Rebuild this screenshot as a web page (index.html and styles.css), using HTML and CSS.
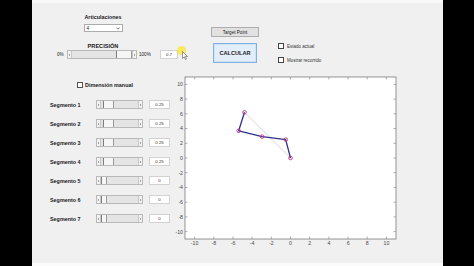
FILE: index.html
```html
<!DOCTYPE html>
<html>
<head>
  <link rel="stylesheet" href="styles.css">
</head>
<body>
  <div class="window">
    <div class="top">
      <div class="controls">
        <div class="group">
          <div class="caption">Articulaciones</div>
          <div class="select">
            <span>4</span>
            <svg class="caret" width="4" height="3" viewBox="0 0 4 3"><path d="M0.3 0.5L2 2.3L3.7 0.5" fill="none" stroke="#444" stroke-width="0.7"/></svg>
          </div>
          <div class="heading">PRECISIÓN</div>
        </div>
        <div class="precision">
          <span class="pct">0%</span>
          <div class="slider wide">
            <span class="arrow left"></span>
            <span class="track"><span class="thumb" style="margin-left:44px;width:16px"></span></span>
            <span class="arrow right"></span>
          </div>
          <span class="pct max">100%</span>
          <div class="edit small">0.7</div>
          <span class="pointer">
            <span class="halo"></span>
            <svg class="arrow-cursor" width="6" height="9" viewBox="0 0 6 9"><path d="M0.5 0.5L0.5 7.5L2.2 5.9L3.4 8.5L4.4 8L3.3 5.5L5.5 5.5Z" fill="#fff" stroke="#555" stroke-width="0.6"/></svg>
          </span>
        </div>
      </div>
      <div class="actions">
        <div class="btn">Target Point</div>
        <div class="btn primary">CALCULAR</div>
      </div>
      <div class="options">
        <div class="check"><span class="box"></span>Estado actual</div>
        <div class="check"><span class="box"></span>Mostrar recorrido</div>
      </div>
    </div>

    <div class="bottom">
      <div class="segments">
        <div class="check manual"><span class="box"></span>Dimensión manual</div>
        <div class="seg-row">
          <span class="seg-label">Segmento 1</span>
          <div class="slider"><span class="arrow left"></span><span class="track"><span class="thumb" style="margin-left:2px;width:11px"></span></span><span class="arrow right"></span></div>
          <div class="edit">0.25</div>
        </div>
        <div class="seg-row">
          <span class="seg-label">Segmento 2</span>
          <div class="slider"><span class="arrow left"></span><span class="track"><span class="thumb" style="margin-left:2px;width:11px"></span></span><span class="arrow right"></span></div>
          <div class="edit">0.25</div>
        </div>
        <div class="seg-row">
          <span class="seg-label">Segmento 3</span>
          <div class="slider"><span class="arrow left"></span><span class="track"><span class="thumb" style="margin-left:2px;width:11px"></span></span><span class="arrow right"></span></div>
          <div class="edit">0.25</div>
        </div>
        <div class="seg-row">
          <span class="seg-label">Segmento 4</span>
          <div class="slider"><span class="arrow left"></span><span class="track"><span class="thumb" style="margin-left:2px;width:11px"></span></span><span class="arrow right"></span></div>
          <div class="edit">0.25</div>
        </div>
        <div class="seg-row">
          <span class="seg-label">Segmento 5</span>
          <div class="slider"><span class="arrow left"></span><span class="track"><span class="thumb" style="margin-left:0;width:6px"></span></span><span class="arrow right"></span></div>
          <div class="edit">0</div>
        </div>
        <div class="seg-row">
          <span class="seg-label">Segmento 6</span>
          <div class="slider"><span class="arrow left"></span><span class="track"><span class="thumb" style="margin-left:0;width:6px"></span></span><span class="arrow right"></span></div>
          <div class="edit">0</div>
        </div>
        <div class="seg-row">
          <span class="seg-label">Segmento 7</span>
          <div class="slider"><span class="arrow left"></span><span class="track"><span class="thumb" style="margin-left:0;width:6px"></span></span><span class="arrow right"></span></div>
          <div class="edit">0</div>
        </div>
      </div>

      <svg class="plot" width="230" height="180" viewBox="0 0 230 180">
        <rect x="13" y="5" width="211" height="162" fill="#fff" stroke="#7a7a7a" stroke-width="0.8"/>
        <!-- ticks, inward on all four sides -->
        <path stroke="#7a7a7a" stroke-width="0.6" fill="none"
          d="M22.6 167v-2.5M41.8 167v-2.5M61 167v-2.5M80.1 167v-2.5M99.3 167v-2.5M118.5 167v-2.5M137.7 167v-2.5M156.9 167v-2.5M176.1 167v-2.5M195.2 167v-2.5M214.4 167v-2.5
             M22.6 5v2.5M41.8 5v2.5M61 5v2.5M80.1 5v2.5M99.3 5v2.5M118.5 5v2.5M137.7 5v2.5M156.9 5v2.5M176.1 5v2.5M195.2 5v2.5M214.4 5v2.5
             M13 12.4h2.5M13 27.1h2.5M13 41.8h2.5M13 56.5h2.5M13 71.3h2.5M13 86h2.5M13 100.7h2.5M13 115.5h2.5M13 130.2h2.5M13 144.9h2.5M13 159.6h2.5
             M224 12.4h-2.5M224 27.1h-2.5M224 41.8h-2.5M224 56.5h-2.5M224 71.3h-2.5M224 86h-2.5M224 100.7h-2.5M224 115.5h-2.5M224 130.2h-2.5M224 144.9h-2.5M224 159.6h-2.5"/>
        <g class="ticklabels" text-anchor="middle">
          <text x="22.6" y="173.4">-10</text>
          <text x="41.8" y="173.4">-8</text>
          <text x="61" y="173.4">-6</text>
          <text x="80.1" y="173.4">-4</text>
          <text x="99.3" y="173.4">-2</text>
          <text x="118.5" y="173.4">0</text>
          <text x="137.7" y="173.4">2</text>
          <text x="156.9" y="173.4">4</text>
          <text x="176.1" y="173.4">6</text>
          <text x="195.2" y="173.4">8</text>
          <text x="214.4" y="173.4">10</text>
        </g>
        <g class="ticklabels" text-anchor="end">
          <text x="11" y="14.3">10</text>
          <text x="11" y="29">8</text>
          <text x="11" y="43.7">6</text>
          <text x="11" y="58.4">4</text>
          <text x="11" y="73.2">2</text>
          <text x="11" y="87.9">0</text>
          <text x="11" y="102.6">-2</text>
          <text x="11" y="117.4">-4</text>
          <text x="11" y="132.1">-6</text>
          <text x="11" y="146.8">-8</text>
          <text x="11" y="161.5">-10</text>
        </g>
        <!-- straight line base to end effector -->
        <path d="M118.5 86L72.5 40.3" stroke="#d4c6cd" stroke-width="0.8" fill="none"/>
        <!-- arm -->
        <polyline points="118.5,86 113.7,67.6 90.2,64.6 66.7,58.8 72.5,40.3" fill="none" stroke="#2f3190" stroke-width="1.3" stroke-linejoin="round"/>
        <g fill="none" stroke="#c2307c" stroke-width="0.9">
          <circle cx="118.5" cy="86" r="1.8"/>
          <circle cx="113.7" cy="67.6" r="1.8"/>
          <circle cx="90.2" cy="64.6" r="1.8"/>
          <circle cx="66.7" cy="58.8" r="1.8"/>
          <circle cx="72.5" cy="40.3" r="1.8"/>
        </g>
      </svg>
    </div>
  </div>
</body>
</html>
```

FILE: styles.css
```css
/* MATLAB style GUI window on a black screen */
* {
  box-sizing: border-box;
}

html, body {
  margin: 0;
}

body {
  background-color: #000;
  font-family: "Liberation Sans", Arial, sans-serif;
  color: #1a1a1a;
}

.window {
  margin-left: 32px;
  width: 411px;
  height: 266px;
  background-color: #f0f0f0;
  border-top: 3px solid #f8f8f8;
  border-bottom: 3px solid #fbfbfb;
  display: flex;
  flex-direction: column;
}

.top {
  display: flex;
  height: 69px;
}

.controls {
  width: 150px;
  display: flex;
  flex-direction: column;
}

.group {
  width: 142px;
  display: flex;
  flex-direction: column;
  align-items: center;
}

.caption {
  margin-top: 10px;
  font-size: 5.4px;
  font-weight: bold;
  line-height: 8px;
}

.select {
  margin-top: 3px;
  width: 39px;
  height: 8px;
  background-color: #fff;
  border: 1px solid #acacac;
  display: flex;
  align-items: center;
  justify-content: space-between;
  padding: 0 2px;
  font-size: 4.6px;
}

.heading {
  margin-top: 11px;
  font-size: 5.6px;
  font-weight: bold;
  line-height: 7px;
}

.precision {
  position: relative;
  margin-left: 25px;
  height: 9px;
  display: flex;
  align-items: center;
}

.pct {
  width: 10px;
  font-size: 4.6px;
}

.pct.max {
  width: 15px;
  margin-left: 2px;
}

.slider {
  width: 47px;
  height: 9px;
  display: flex;
  border: 1px solid #b9b9b9;
  background-color: #e4e4e4;
}

.slider.wide {
  width: 70px;
}

.arrow {
  width: 4px;
  background-color: #f2f2f2;
  display: flex;
  align-items: center;
  justify-content: center;
}

.arrow.left {
  border-right: 1px solid #c8c8c8;
}

.arrow.right {
  border-left: 1px solid #c8c8c8;
}

.arrow::before {
  content: "";
  border-top: 1.2px solid transparent;
  border-bottom: 1.2px solid transparent;
}

.arrow.left::before {
  border-right: 1.3px solid #555;
}

.arrow.right::before {
  border-left: 1.3px solid #555;
}

.track {
  flex: 1;
  display: flex;
}

.thumb {
  background-color: #f6f6f6;
  border-left: 1px solid #7d7d7d;
  border-right: 1px solid #9a9a9a;
}

.edit {
  width: 21px;
  height: 9px;
  margin-left: 6px;
  background-color: #fff;
  border: 1px solid #d2d2d2;
  font-size: 4.4px;
  display: flex;
  align-items: center;
  justify-content: center;
  color: #333;
}

.edit.small {
  width: 18px;
  margin-left: 6px;
}

.pointer {
  position: absolute;
  left: 120px;
  top: -4px;
  width: 12px;
  height: 14px;
}

.halo {
  position: absolute;
  left: 0;
  top: 0;
  width: 9px;
  height: 9px;
  border-radius: 50%;
  background-color: rgba(248, 232, 70, 0.85);
}

.arrow-cursor {
  position: absolute;
  left: 5px;
  top: 5px;
}

.actions {
  margin-left: 29px;
  width: 48px;
  display: flex;
  flex-direction: column;
}

.btn {
  margin-top: 24px;
  height: 10px;
  background-color: #e1e1e1;
  border: 1px solid #adadad;
  font-size: 4.6px;
  display: flex;
  align-items: center;
  justify-content: center;
}

.btn.primary {
  margin-top: 6px;
  margin-left: 2px;
  width: 44px;
  height: 20px;
  background-color: #e2eef9;
  border: 1px solid #7fb2e2;
  box-shadow: inset 0 0 0 1px #cfe3f6;
  font-size: 5.6px;
  font-weight: bold;
  color: #222;
}

.options {
  margin-left: 19px;
  padding-top: 40px;
  display: flex;
  flex-direction: column;
  gap: 8px;
}

.check {
  display: flex;
  align-items: center;
  height: 6px;
  font-size: 4.5px;
  color: #333;
}

.box {
  width: 6px;
  height: 6px;
  margin-right: 3px;
  background-color: #fff;
  border: 1px solid #444;
}

.bottom {
  display: flex;
  flex: 1;
}

.segments {
  width: 140px;
  display: flex;
  flex-direction: column;
  gap: 10px;
}

.check.manual {
  margin-top: 9px;
  margin-left: 45px;
  margin-bottom: 2px;
  height: 7px;
  font-size: 5.4px;
  font-weight: bold;
  color: #1a1a1a;
}

.check.manual .box {
  border-color: #555;
  margin-right: 2px;
}

.seg-row {
  margin-left: 18px;
  height: 9px;
  display: flex;
  align-items: center;
}

.seg-label {
  width: 46px;
  font-size: 5.4px;
  font-weight: bold;
}

.plot {
  display: block;
}

.ticklabels {
  font-family: "Liberation Sans", Arial, sans-serif;
  font-size: 5.2px;
  fill: #4a4a4a;
}
```
